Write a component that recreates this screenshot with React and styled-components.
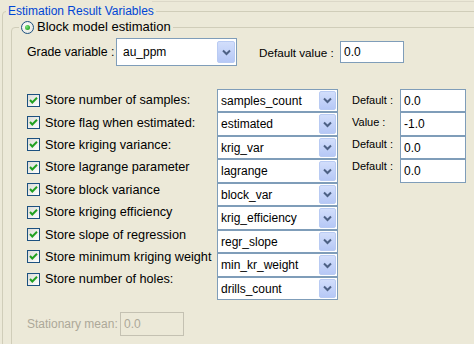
import React from "react";
import styled, { createGlobalStyle } from "styled-components";

const Global = createGlobalStyle`
  html, body { margin: 0; padding: 0; background: #ECE9D8; overflow: hidden; }
  body { font-family: "Liberation Sans", Arial, sans-serif; font-size: 12px; color: #000; }
`;

const Page = styled.div`
  width: 474px;
  height: 344px;
  overflow: hidden;
  padding-left: 2px;
  box-sizing: border-box;
`;

const TopEdge = styled.div`
  height: 1px;
  margin: 1px 0 0 150px;
  background: #DCD8C8;
`;

const Group = styled.fieldset`
  margin: ${(p) => (p.$inner ? "2px 0 0 8px" : "2px 0 0 0")};
  padding: 0;
  border: 1px solid #D0CDB9;
  border-radius: 4px;
  width: 540px;
  min-width: 0;
  height: ${(p) => (p.$inner ? "360px" : "400px")};
  box-sizing: border-box;
`;

const Legend = styled.legend`
  margin-left: ${(p) => (p.$inner ? "7px" : "3px")};
  padding: 0 2px;
  height: 14px;
  line-height: 14px;
  font-size: ${(p) => (p.$inner ? "13px" : "12px")};
  color: ${(p) => (p.$blue ? "#0046D5" : "#000")};
  display: flex;
  align-items: center;
  gap: 3px;
`;

const Radio = styled.span`
  width: 11px;
  height: 11px;
  border: 1px solid #1C5180;
  border-radius: 50%;
  background: radial-gradient(circle at 40% 40%, #fff 0%, #E6E6E0 80%);
  display: flex;
  align-items: center;
  justify-content: center;
  &::after {
    content: "";
    width: 5px;
    height: 5px;
    border-radius: 50%;
    background: radial-gradient(circle at 35% 35%, #7BE37B 0%, #21A121 80%);
  }
`;

const Content = styled.div`
  padding: 4px 0 0 15px;
`;

const GradeRow = styled.div`
  display: flex;
  align-items: center;
  height: 28px;
`;

const FieldLabel = styled.span`
  width: ${(p) => p.$w}px;
  flex: none;
  white-space: nowrap;
  font-size: ${(p) => p.$fs || 12}px;
  color: ${(p) => (p.$disabled ? "#ACA899" : "#000")};
  margin-left: ${(p) => p.$ml || 0}px;
`;

const ComboBox = styled.div`
  box-sizing: border-box;
  width: 121px;
  height: ${(p) => (p.$tall ? "28px" : "100%")};
  border: 1px solid #7F9DB9;
  background: #fff;
  display: flex;
  align-items: center;
  padding: ${(p) => (p.$tall ? "2px 1px 2px 6px" : "1px 1px 1px 3px")};
`;

const ComboText = styled.span`
  flex: 1;
  white-space: nowrap;
  overflow: hidden;
`;

const ArrowButton = styled.span`
  width: ${(p) => (p.$tall ? "18px" : "17px")};
  height: 100%;
  box-sizing: border-box;
  border: 1px solid #B9CBF3;
  border-radius: 2px;
  background: linear-gradient(#D2DEFB, #B6C8F6);
  display: flex;
  align-items: center;
  justify-content: center;
`;

const TextBox = styled.div`
  box-sizing: border-box;
  width: ${(p) => p.$w}px;
  height: ${(p) => p.$h || "100%"};
  border: 1px solid ${(p) => (p.$disabled ? "#C4C1B2" : "#7F9DB9")};
  background: ${(p) => (p.$disabled ? "#ECE9D8" : "#fff")};
  color: ${(p) => (p.$disabled ? "#ACA899" : "#000")};
  padding-left: 3px;
  display: flex;
  align-items: center;
  white-space: nowrap;
`;

const ListSection = styled.div`
  display: flex;
  margin-top: 23px;
`;

const CheckColumn = styled.div`
  width: 190px;
  display: grid;
  grid-auto-rows: 22.4px;
`;

const CheckRow = styled.label`
  display: flex;
  align-items: center;
  gap: 5px;
  white-space: nowrap;
  font-size: 12.7px;
`;

const CheckBox = styled.span`
  box-sizing: border-box;
  width: 13px;
  height: 13px;
  border: 1px solid #1C5180;
  background: linear-gradient(135deg, #DCDCD7, #fff);
  display: flex;
  align-items: center;
  justify-content: center;
  flex: none;
`;

const StackGrid = styled.div`
  display: grid;
  grid-template-rows: 23px 24px 23px 24px 23px 24px 23px 24px 23px;
`;

const DefaultsSection = styled.div`
  display: flex;
  margin-left: 14px;
`;

const DefaultLabels = styled.div`
  width: 48px;
  display: grid;
  grid-auto-rows: 22px;
`;

const DefaultLabel = styled.span`
  display: flex;
  align-items: center;
  font-size: 11px;
`;

const StationaryRow = styled.div`
  display: flex;
  align-items: center;
  margin-top: 12px;
  height: 24px;
`;

const Chevron = () => (
  <svg width="9" height="7" viewBox="0 0 9 7">
    <path d="M1 1.5 L4.5 5 L8 1.5" fill="none" stroke="#4D6185" strokeWidth="2" />
  </svg>
);

const Check = () => (
  <svg width="9" height="9" viewBox="0 0 9 9">
    <path d="M1 4 L3.3 6.5 L8 1.8" fill="none" stroke="#21A121" strokeWidth="2" />
  </svg>
);

const Combo = ({ value, tall }) => (
  <ComboBox $tall={tall}>
    <ComboText>{value}</ComboText>
    <ArrowButton $tall={tall}>
      <Chevron />
    </ArrowButton>
  </ComboBox>
);

const rows = [
  ["Store number of samples:", "samples_count"],
  ["Store flag when estimated:", "estimated"],
  ["Store kriging variance:", "krig_var"],
  ["Store lagrange parameter", "lagrange"],
  ["Store block variance", "block_var"],
  ["Store kriging efficiency", "krig_efficiency"],
  ["Store slope of regression", "regr_slope"],
  ["Store minimum kriging weight", "min_kr_weight"],
  ["Store number of holes:", "drills_count"],
];

const defaults = [
  ["Default :", "0.0"],
  ["Value :", "-1.0"],
  ["Default :", "0.0"],
  ["Default :", "0.0"],
];

export default function App() {
  return (
    <>
      <Global />
      <Page>
        <TopEdge />
        <Group>
          <Legend $blue>Estimation Result Variables</Legend>
          <Group $inner>
            <Legend $inner>
              <Radio />
              Block model estimation
            </Legend>
            <Content>
              <GradeRow>
                <FieldLabel $w={89} $fs={12.3}>Grade variable :</FieldLabel>
                <Combo value="au_ppm" tall />
                <FieldLabel $w={81} $ml={22} $fs={11.7}>Default value :</FieldLabel>
                <TextBox $w={64} $h="22px">0.0</TextBox>
              </GradeRow>
              <ListSection>
                <CheckColumn>
                  {rows.map(([label]) => (
                    <CheckRow key={label}>
                      <CheckBox>
                        <Check />
                      </CheckBox>
                      {label}
                    </CheckRow>
                  ))}
                </CheckColumn>
                <StackGrid>
                  {rows.map(([label, v]) => (
                    <Combo key={label} value={v} />
                  ))}
                </StackGrid>
                <DefaultsSection>
                  <DefaultLabels>
                    {defaults.map(([l], i) => (
                      <DefaultLabel key={i}>{l}</DefaultLabel>
                    ))}
                  </DefaultLabels>
                  <StackGrid>
                    {defaults.map(([, v], i) => (
                      <TextBox key={i} $w={66}>{v}</TextBox>
                    ))}
                  </StackGrid>
                </DefaultsSection>
              </ListSection>
              <StationaryRow>
                <FieldLabel $w={93} $disabled>Stationary mean:</FieldLabel>
                <TextBox $w={64} $h="24px" $disabled>0.0</TextBox>
              </StationaryRow>
            </Content>
          </Group>
        </Group>
      </Page>
    </>
  );
}
